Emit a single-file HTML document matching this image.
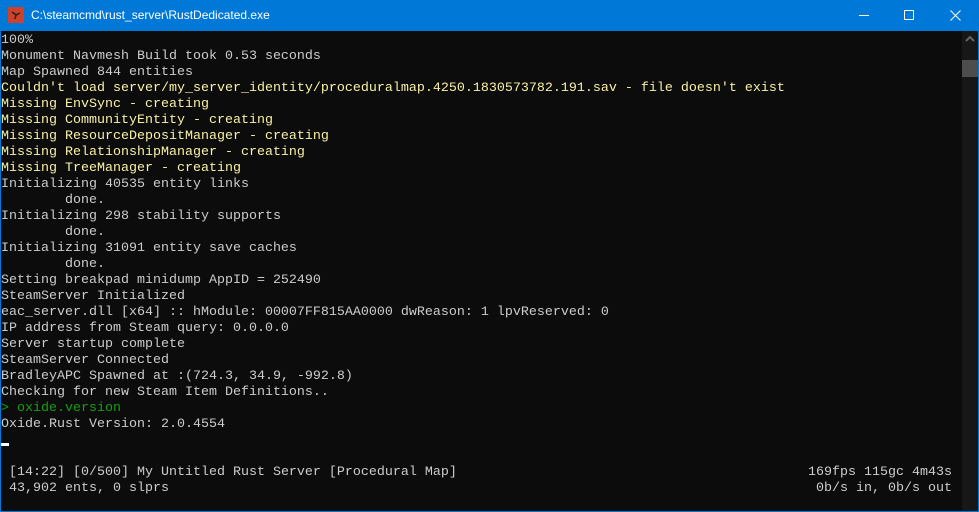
<!DOCTYPE html>
<html><head><style>
*{margin:0;padding:0;box-sizing:border-box}
body{width:979px;height:512px;background:#0c0c0c;overflow:hidden;position:relative;font-family:"Liberation Mono",monospace;}
#tb{position:absolute;left:0;top:0;width:979px;height:31px;background:#0078d7;color:#fff;font-family:"Liberation Sans",sans-serif;font-size:12px}
#tb .t{position:absolute;left:31px;top:8px}
#ic{position:absolute;left:8px;top:7px;width:16px;height:16px;background:#ce412b}
#con{position:absolute;left:1px;top:33px;font-size:13.33px;line-height:16px;color:#cccccc;white-space:pre}
.y{color:#f9f1a5}.g{color:#13a10e}
#sb{position:absolute;left:962px;top:31px;width:16px;height:480px;background:#171717}
#th{position:absolute;left:962px;top:60px;width:16px;height:17px;background:#4d4d4d}
#bl{position:absolute;left:0;top:31px;width:1px;height:481px;background:#0078d7}
#br{position:absolute;left:978px;top:31px;width:1px;height:481px;background:#0078d7}
#bb{position:absolute;left:0;top:511px;width:979px;height:1px;background:#0078d7}
.st{position:absolute;font-size:13.33px;line-height:16px;color:#cccccc;white-space:pre}
</style></head><body>
<div id="tb"><div id="ic"><svg width="16" height="16"><g stroke="#222" stroke-width="1.5"><line x1="4" y1="5" x2="8" y2="8"/><line x1="8" y1="8" x2="12" y2="6"/><line x1="8" y1="8" x2="7" y2="12"/></g></svg></div><span class="t">C:\steamcmd\rust_server\RustDedicated.exe</span>
<svg style="position:absolute;left:780px;top:0" width="199" height="31"><line x1="79" y1="15.5" x2="89" y2="15.5" stroke="#fff"/><rect x="124.5" y="10.5" width="9" height="9" fill="none" stroke="#fff"/><path d="M170.5 10.5L180.5 20.5M180.5 10.5L170.5 20.5" stroke="#fff"/></svg></div>
<div id="con">100%
Monument Navmesh Build took 0.53 seconds
Map Spawned 844 entities
<span class="y">Couldn't load server/my_server_identity/proceduralmap.4250.1830573782.191.sav - file doesn't exist
Missing EnvSync - creating
Missing CommunityEntity - creating
Missing ResourceDepositManager - creating
Missing RelationshipManager - creating
Missing TreeManager - creating</span>
Initializing 40535 entity links
        done.
Initializing 298 stability supports
        done.
Initializing 31091 entity save caches
        done.
Setting breakpad minidump AppID = 252490
SteamServer Initialized
eac_server.dll [x64] :: hModule: 00007FF815AA0000 dwReason: 1 lpvReserved: 0
IP address from Steam query: 0.0.0.0
Server startup complete
SteamServer Connected
BradleyAPC Spawned at :(724.3, 34.9, -992.8)
Checking for new Steam Item Definitions..
<span class="g">&gt; oxide.version</span>
Oxide.Rust Version: 2.0.4554
</div>
<div style="position:absolute;left:1px;top:443px;width:8px;height:3px;background:#fff"></div>
<div class="st" style="left:9px;top:465px">[14:22] [0/500] My Untitled Rust Server [Procedural Map]
43,902 ents, 0 slprs</div>
<div class="st" style="right:27px;top:465px;text-align:right">169fps 115gc 4m43s
0b/s in, 0b/s out</div>
<div id="sb"></div><div id="th"></div>
<svg style="position:absolute;left:962px;top:31px" width="16" height="16"><path d="M4 10L8 6L12 10" stroke="#666" stroke-width="2" fill="none"/></svg>
<div id="bl"></div><div id="br"></div><div id="bb"></div>
</body></html>
